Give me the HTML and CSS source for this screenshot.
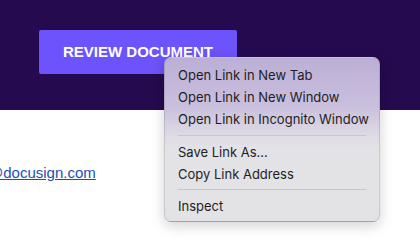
FILE: index.html
```html
<!DOCTYPE html>
<html>
<head>
    <title>Review Document</title>
    <link rel="stylesheet" href="styles.css">
</head>
<body>
    <header class="hero">
        <a class="review-button" href="#">REVIEW DOCUMENT</a>
    </header>
    <section class="content">
        <p class="contact"><a href="#">support@docusign.com</a></p>
    </section>

    <!-- Context menu opened on the button link -->
    <div class="context-menu">
        <div class="menu-item">Open Link in New Tab</div>
        <div class="menu-item">Open Link in New Window</div>
        <div class="menu-item">Open Link in Incognito Window</div>
        <div class="menu-sep"></div>
        <div class="menu-item">Save Link As...</div>
        <div class="menu-item">Copy Link Address</div>
        <div class="menu-sep"></div>
        <div class="menu-item">Inspect</div>
    </div>
</body>
</html>
```

FILE: styles.css
```css
body {
    margin: 0;
    background-color: #fff;
    font-family: "Liberation Sans", Arial, sans-serif;
    overflow: hidden;
}

.hero {
    height: 110px;
    background-color: #250a4f;
    padding: 30px 0 0 39px;
    box-sizing: border-box;
}

.review-button {
    display: inline-block;
    width: 198px;
    height: 44px;
    line-height: 44px;
    text-align: center;
    background-color: #6c53fb;
    color: #fff;
    font-weight: bold;
    font-size: 15px;
    text-decoration: none;
    border-radius: 2px;
}

.content {
    padding-top: 54px;
}

.contact {
    margin: 0 0 0 -62px;
    font-size: 15px;
}

.contact a {
    color: #1b4fb5;
}

/* --- Context menu --- */
.context-menu {
    position: absolute;
    left: 164px;
    top: 57px;
    width: 216px;
    box-sizing: border-box;
    padding: 6px 0 4px;
    border-radius: 7px;
    border: 1px solid rgba(0, 0, 0, 0.12);
    background: linear-gradient(#bcafd6, #c9bfdd 30%, #dcd8e3 45%, #e3e2e6 55%, #e3e3e5);
    box-shadow: 0 4px 14px rgba(0, 0, 0, 0.18);
    font-family: Inter, "Noto Sans", sans-serif;
    font-size: 13px;
    color: #1e1e1e;
}

.menu-item {
    height: 22px;
    line-height: 22px;
    padding-left: 13px;
}

.menu-sep {
    height: 1px;
    margin: 4.5px 13px 5px;
    background-color: #c6c5ca;
}
```
